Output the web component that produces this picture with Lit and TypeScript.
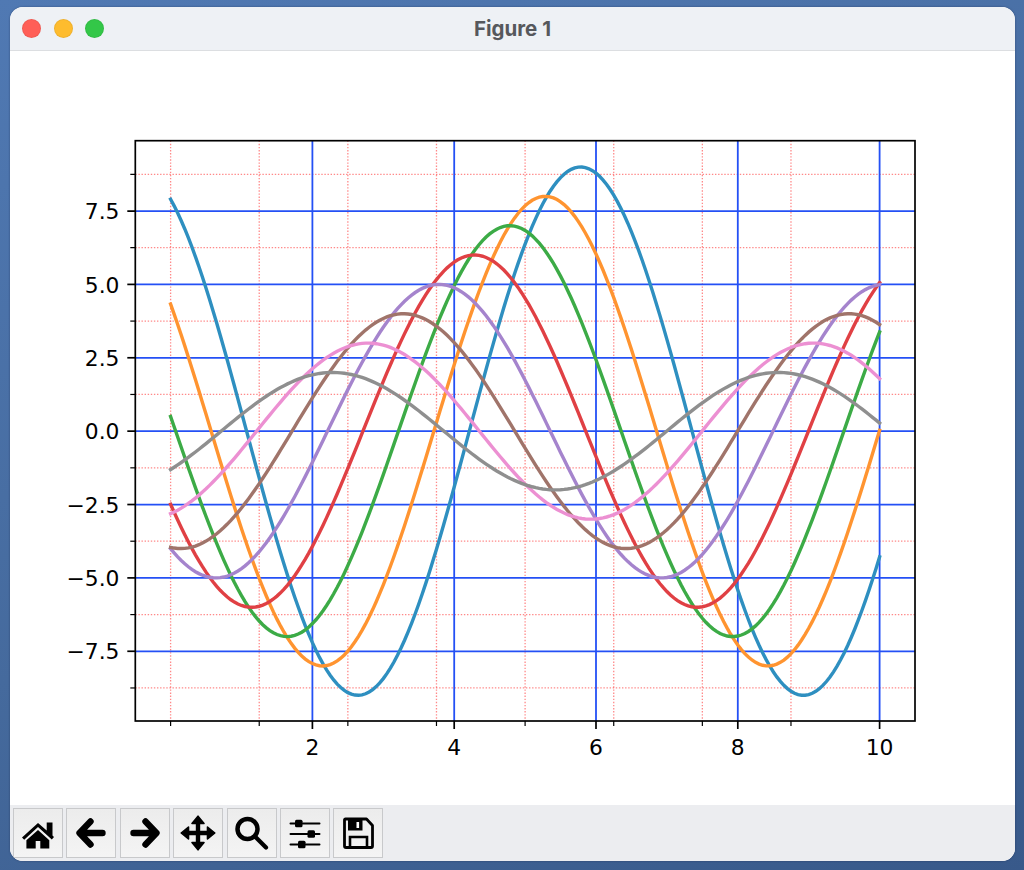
import { LitElement, html, css, svg } from "lit";
import { customElement } from "lit/decorators.js";

const X0 = 170.6, XS = 70.9, Y0 = 431.15, YS = 29.35;
const AX = { l: 135.3, r: 915, t: 140.7, b: 721 };
const px = (v: number) => X0 + v * XS;
const py = (v: number) => Y0 - v * YS;

const SERIES: [number, number, string][] = [
  [9, 2.07, "#2e8fc0"],
  [8, 2.57, "#ff9430"],
  [7, 3.07, "#3cab46"],
  [6, 3.57, "#e04044"],
  [5, 4.07, "#a584cd"],
  [4, 4.57, "#a0746a"],
  [3, 5.07, "#ec90d2"],
  [2, 5.57, "#8f8f8f"],
];

const curve = (a: number, p: number) => {
  const pts: string[] = [];
  for (let i = 0; i <= 200; i++) {
    const x = i / 20;
    pts.push(`${px(x).toFixed(2)},${py(a * Math.sin(x + p)).toFixed(2)}`);
  }
  return pts.join(" ");
};

const X_MINOR = [0, 1.25, 2.5, 3.75, 5, 6.25, 7.5, 8.75];
const Y_MINOR = [-8.75, -6.25, -3.75, -1.25, 1.25, 3.75, 6.25, 8.75];
const X_MAJOR = [2, 4, 6, 8, 10];
const Y_MAJOR = [-7.5, -5, -2.5, 0, 2.5, 5, 7.5];
const yLabel = (v: number) => (v < 0 ? "\u2212" : "") + Math.abs(v).toFixed(1);

@customElement("app-root")
export class AppRoot extends LitElement {
  static styles = css`
    :host {
      display: block;
      width: 1024px;
      height: 870px;
      box-sizing: border-box;
      padding: 6.5px 9px 9px 10px;
      background: linear-gradient(160deg, #5079b3 0%, #456a9d 55%, #38598a 100%);
      overflow: hidden;
    }
    .window {
      height: 100%;
      display: flex;
      flex-direction: column;
      border-radius: 13px;
      overflow: hidden;
      background: #fff;
      box-shadow: 0 0 2px rgba(20, 30, 60, 0.5);
    }
    .titlebar {
      height: 44px;
      flex: none;
      box-sizing: border-box;
      padding: 0 12px;
      display: flex;
      align-items: center;
      position: relative;
      background: #eef1f5;
      border-bottom: 1px solid #dcdee1;
    }
    .lights { display: flex; gap: 12.5px; }
    .light {
      width: 19px;
      height: 19px;
      border-radius: 50%;
      box-sizing: border-box;
      border: 1px solid rgba(0, 0, 0, 0.06);
    }
    .red { background: #ff5f57; }
    .yellow { background: #febc2e; }
    .green { background: #33c748; }
    .title {
      position: absolute;
      inset: 0;
      display: flex;
      align-items: center;
      justify-content: center;
      font: 700 20.5px "Inter", "Liberation Sans", sans-serif;
      color: #56585c;
    }
    .canvas { flex: 1; min-height: 0; background: #fff; overflow: hidden; }
    .plot { display: block; margin: -50.5px 0 0 -10px; }
    .tick-label {
      font-family: "DejaVu Sans", sans-serif;
      font-size: 21.8px;
      fill: #000;
    }
    .toolbar {
      height: 56px;
      flex: none;
      box-sizing: border-box;
      padding: 3.4px 0 0 3px;
      display: flex;
      gap: 3.4px;
      background: #ecedf0;
    }
    .tool {
      width: 50px;
      height: 49.5px;
      box-sizing: border-box;
      border: 1px solid #c8c9cb;
      background: linear-gradient(#ececec, #f4f4f4);
      display: flex;
      align-items: center;
      justify-content: center;
      padding: 0;
    }
    .tool svg { display: block; }
  `;

  private plot() {
    return html`<svg class="plot" width="1024" height="870" viewBox="0 0 1024 870">
      ${Y_MINOR.map((v) => svg`<line x1=${AX.l} x2=${AX.r} y1=${py(v)} y2=${py(v)} stroke="#ff4040" stroke-opacity=".62" stroke-width="1.3" stroke-dasharray="1.4 1.7"/>`)}
      ${X_MINOR.map((v) => svg`<line y1=${AX.t} y2=${AX.b} x1=${px(v)} x2=${px(v)} stroke="#ff4040" stroke-opacity=".62" stroke-width="1.3" stroke-dasharray="1.4 1.7"/>`)}
      ${Y_MAJOR.map((v) => svg`<line x1=${AX.l} x2=${AX.r} y1=${py(v)} y2=${py(v)} stroke="#2450f5" stroke-width="1.7"/>`)}
      ${X_MAJOR.map((v) => svg`<line y1=${AX.t} y2=${AX.b} x1=${px(v)} x2=${px(v)} stroke="#2450f5" stroke-width="1.8"/>`)}
      ${SERIES.map(([a, p, c]) => svg`<polyline points=${curve(a, p)} fill="none" stroke=${c} stroke-width="3.4" stroke-linecap="square"/>`)}
      <rect x=${AX.l} y=${AX.t} width=${AX.r - AX.l} height=${AX.b - AX.t} fill="none" stroke="#000" stroke-width="1.7"/>
      ${X_MAJOR.map((v) => svg`<line y1=${AX.b} y2=${AX.b + 8} x1=${px(v)} x2=${px(v)} stroke="#000" stroke-width="1.7"/>
        <text class="tick-label" x=${px(v)} y="755" text-anchor="middle">${v}</text>`)}
      ${X_MINOR.map((v) => svg`<line y1=${AX.b} y2=${AX.b + 5} x1=${px(v)} x2=${px(v)} stroke="#000" stroke-width="1.2"/>`)}
      ${Y_MAJOR.map((v) => svg`<line x1=${AX.l - 8} x2=${AX.l} y1=${py(v)} y2=${py(v)} stroke="#000" stroke-width="1.7"/>
        <text class="tick-label" x="119.5" y=${py(v) + 8.2} text-anchor="end">${yLabel(v)}</text>`)}
      ${Y_MINOR.map((v) => svg`<line x1=${AX.l - 5} x2=${AX.l} y1=${py(v)} y2=${py(v)} stroke="#000" stroke-width="1.2"/>`)}
    </svg>`;
  }

  private icons = [
    // home: chevron roof with chimney over a solid body with a door slot
    svg`<path d="M0 20.5 L16 6 L24.7 13.6 V5.5 H30.5 V18.6 L32 20 L29.8 22.6 L16 10 L2.2 22.8 Z" fill="#000"/><path fill-rule="evenodd" d="M16 13 L27.3 23.2 V31.5 H4.4 V23.2 Z M13.7 24 V31.5 H18.3 V24 Z" fill="#000"/>`,
    // back
    svg`<path d="M27.5 16 H6 M15.5 4.5 L4.5 16 L15.5 27.5" fill="none" stroke="#000" stroke-width="6.4" stroke-linecap="round" stroke-linejoin="round"/>`,
    // forward
    svg`<path d="M4.5 16 H26 M16.5 4.5 L27.5 16 L16.5 27.5" fill="none" stroke="#000" stroke-width="6.4" stroke-linecap="round" stroke-linejoin="round"/>`,
    // move
    svg`<path d="M16 3 V29 M3 16 H29" fill="none" stroke="#000" stroke-width="4.4"/><path d="M16 -0.8 L22 6.5 H10 Z M16 32.8 L22 25.5 H10 Z M-0.8 16 L6.5 10 V22 Z M32.8 16 L25.5 10 V22 Z" fill="#000" stroke="#000" stroke-width="1.6" stroke-linejoin="round"/>`,
    // zoom
    svg`<circle cx="11.5" cy="12" r="10" fill="none" stroke="#000" stroke-width="4.5"/><path d="M19.5 20 L30 30.5" stroke="#000" stroke-width="4.2" stroke-linecap="round"/>`,
    // subplots
    svg`<path d="M1.5 6.5 H30.5 M1.5 17 H30.5 M1.5 27.5 H30.5" stroke="#000" stroke-width="2" stroke-linecap="round"/><rect x="6" y="2.7" width="7.5" height="7.6" rx="1.5"/><rect x="18.5" y="13.2" width="7.5" height="7.6" rx="1.5"/><rect x="9" y="23.7" width="7.5" height="7.6" rx="1.5"/>`,
    // save
    svg`<path d="M2.5 3 Q2.5 2 3.5 2 H24.5 L30.5 8.5 V29 Q30.5 30.5 29 30.5 H4 Q2.5 30.5 2.5 29 Z" fill="none" stroke="#000" stroke-width="2.8" stroke-linejoin="round"/><path d="M6 3 H20.5 V13.5 H6 Z" fill="#000"/><rect x="14.5" y="5" width="2.6" height="6" fill="#fff"/><path d="M8 30 V20 H25 V30" fill="none" stroke="#000" stroke-width="2.6"/>`,
  ];

  render() {
    return html`<div class="window">
      <div class="titlebar">
        <div class="title">Figure 1</div>
        <div class="lights">
          <div class="light red"></div>
          <div class="light yellow"></div>
          <div class="light green"></div>
        </div>
      </div>
      <div class="canvas">${this.plot()}</div>
      <div class="toolbar">
        ${this.icons.map(
          (i) => html`<button class="tool"><svg width="32" height="32" viewBox="0 0 32 32" overflow="visible">${i}</svg></button>`
        )}
      </div>
    </div>`;
  }
}
